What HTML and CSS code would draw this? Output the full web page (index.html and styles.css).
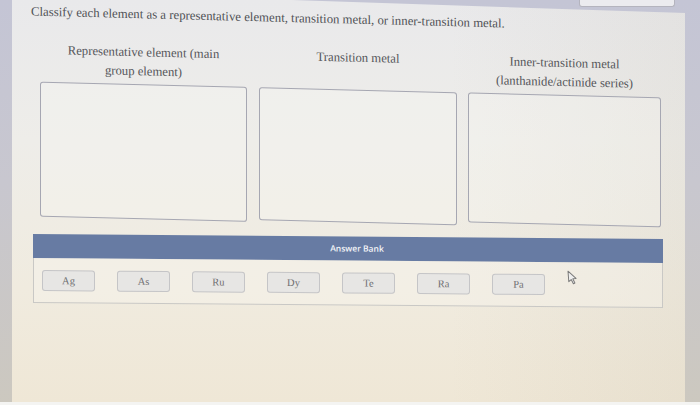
FILE: index.html
```html
<!DOCTYPE html>
<html>
<head>
<meta charset="utf-8">
<link rel="stylesheet" href="styles.css">
</head>
<body>
<div class="screen">
  <div class="topstrip"><div class="topbtn"></div></div>
  <div class="panel">
    <div class="upper">
      <p class="title">Classify each element as a representative element, transition metal, or inner-transition metal.</p>
      <div class="cols">
        <div class="col c1">
          <div class="hdr">Representative element (main<br>group element)</div>
          <div class="box"></div>
        </div>
        <div class="col c2">
          <div class="hdr">Transition metal</div>
          <div class="box"></div>
        </div>
        <div class="col c3">
          <div class="hdr">Inner-transition metal<br>(lanthanide/actinide series)</div>
          <div class="box"></div>
        </div>
      </div>
    </div>
    <div class="bank">
      <div class="bank-bar">Answer Bank</div>
      <div class="bank-items">
        <div class="tile">Ag</div>
        <div class="tile">As</div>
        <div class="tile">Ru</div>
        <div class="tile">Dy</div>
        <div class="tile">Te</div>
        <div class="tile">Ra</div>
        <div class="tile">Pa</div>
        <svg class="cursor" width="10" height="15" viewBox="0 0 10 15">
          <path d="M1 1 L1.8 11.5 L4.2 9.3 L6.4 13.6 L7.9 12.8 L5.8 8.6 L9 8.2 Z" fill="#eeeeee" stroke="#7a7a7a" stroke-width="1" stroke-linejoin="round"/>
        </svg>
      </div>
    </div>
  </div>
  <div class="bottomstrip"></div>
</div>
</body>
</html>
```
FILE: styles.css
```css
html, body {
  margin: 0;
  padding: 0;
}
body {
  width: 700px;
  height: 405px;
  overflow: hidden;
  background: linear-gradient(180deg, #c4c5d5 0%, #c8c7cf 45%, #ccc8bf 100%);
  font-family: "Liberation Serif", "Times New Roman", serif;
}
.screen {
  width: 700px;
  height: 405px;
  display: flex;
  flex-direction: column;
}
.topstrip {
  height: 0;
  overflow: visible;
  display: flex;
}
.topbtn {
  position: relative;
  z-index: 2;
  margin-left: 579px;
  width: 94px;
  height: 6px;
  background: #ebebef;
  border: 1px solid #b4b4be;
  border-top: none;
  border-radius: 0 0 3px 3px;
}
.panel {
  margin-left: 12px;
  width: 673px;
  height: 402px;
  box-sizing: border-box;
  padding-top: 4px;
  background:
    linear-gradient(90deg, rgba(255,255,255,0) 65%, rgba(170,160,140,0.10) 100%),
    linear-gradient(180deg, #e9e9eb 0%, #eeede9 35%, #f0ebdf 72%, #efe7d6 100%);
  clip-path: polygon(0 0, 280px 0, 100% 13px, 100% 100%, 0 100%);
}
.upper {
  transform: skewY(1.45deg);
  transform-origin: 0 0;
}
.title {
  margin: 0;
  padding-left: 19px;
  font-size: 12.8px;
  line-height: 15px;
  height: 15px;
  color: #505256;
  white-space: nowrap;
}
.cols {
  margin-top: 21px;
  padding-left: 28px;
  display: flex;
  align-items: flex-start;
}
.col {
  display: flex;
  flex-direction: column;
}
.c1 { width: 207px; }
.c2 { width: 198px; margin-left: 12px; }
.c3 { width: 193px; margin-left: 11px; }
.hdr {
  height: 41px;
  text-align: center;
  font-size: 12.7px;
  line-height: 19px;
  color: #55565a;
  white-space: nowrap;
}
.box {
  box-sizing: border-box;
  border: 1px solid #a6a7b2;
  border-radius: 3px;
  background: rgba(250, 250, 248, 0.25);
}
.c1 .box { height: 135px; }
.c2 .box { height: 133px; }
.c3 .box { height: 130px; }
.bank {
  margin-top: 18px;
  margin-left: 21px;
  width: 630px;
  transform: skewY(0.45deg);
  transform-origin: 0 0;
}
.bank-bar {
  height: 24px;
  background: #677ba3;
  color: #f4f5f8;
  font-family: "Open Sans", "Liberation Sans", sans-serif;
  font-weight: 600;
  font-size: 8.5px;
  line-height: 24px;
  text-align: center;
  padding-left: 18px;
  box-sizing: border-box;
}
.bank-items {
  position: relative;
  box-sizing: border-box;
  height: 45px;
  border: 1px solid #c9c8c5;
  border-top: none;
  padding: 12px 0 0 8px;
  display: flex;
  gap: 22px;
  background: rgba(248, 247, 242, 0.35);
}
.tile {
  width: 53px;
  height: 21px;
  box-sizing: border-box;
  border: 1px solid #c5c5c7;
  border-radius: 3px;
  background: #e7e6e4;
  color: #6f6f72;
  font-size: 10.5px;
  line-height: 19px;
  text-align: center;
}
.cursor {
  position: absolute;
  left: 533px;
  top: 8px;
}
.bottomstrip {
  height: 3px;
  background: #f4f4f2;
}
```
